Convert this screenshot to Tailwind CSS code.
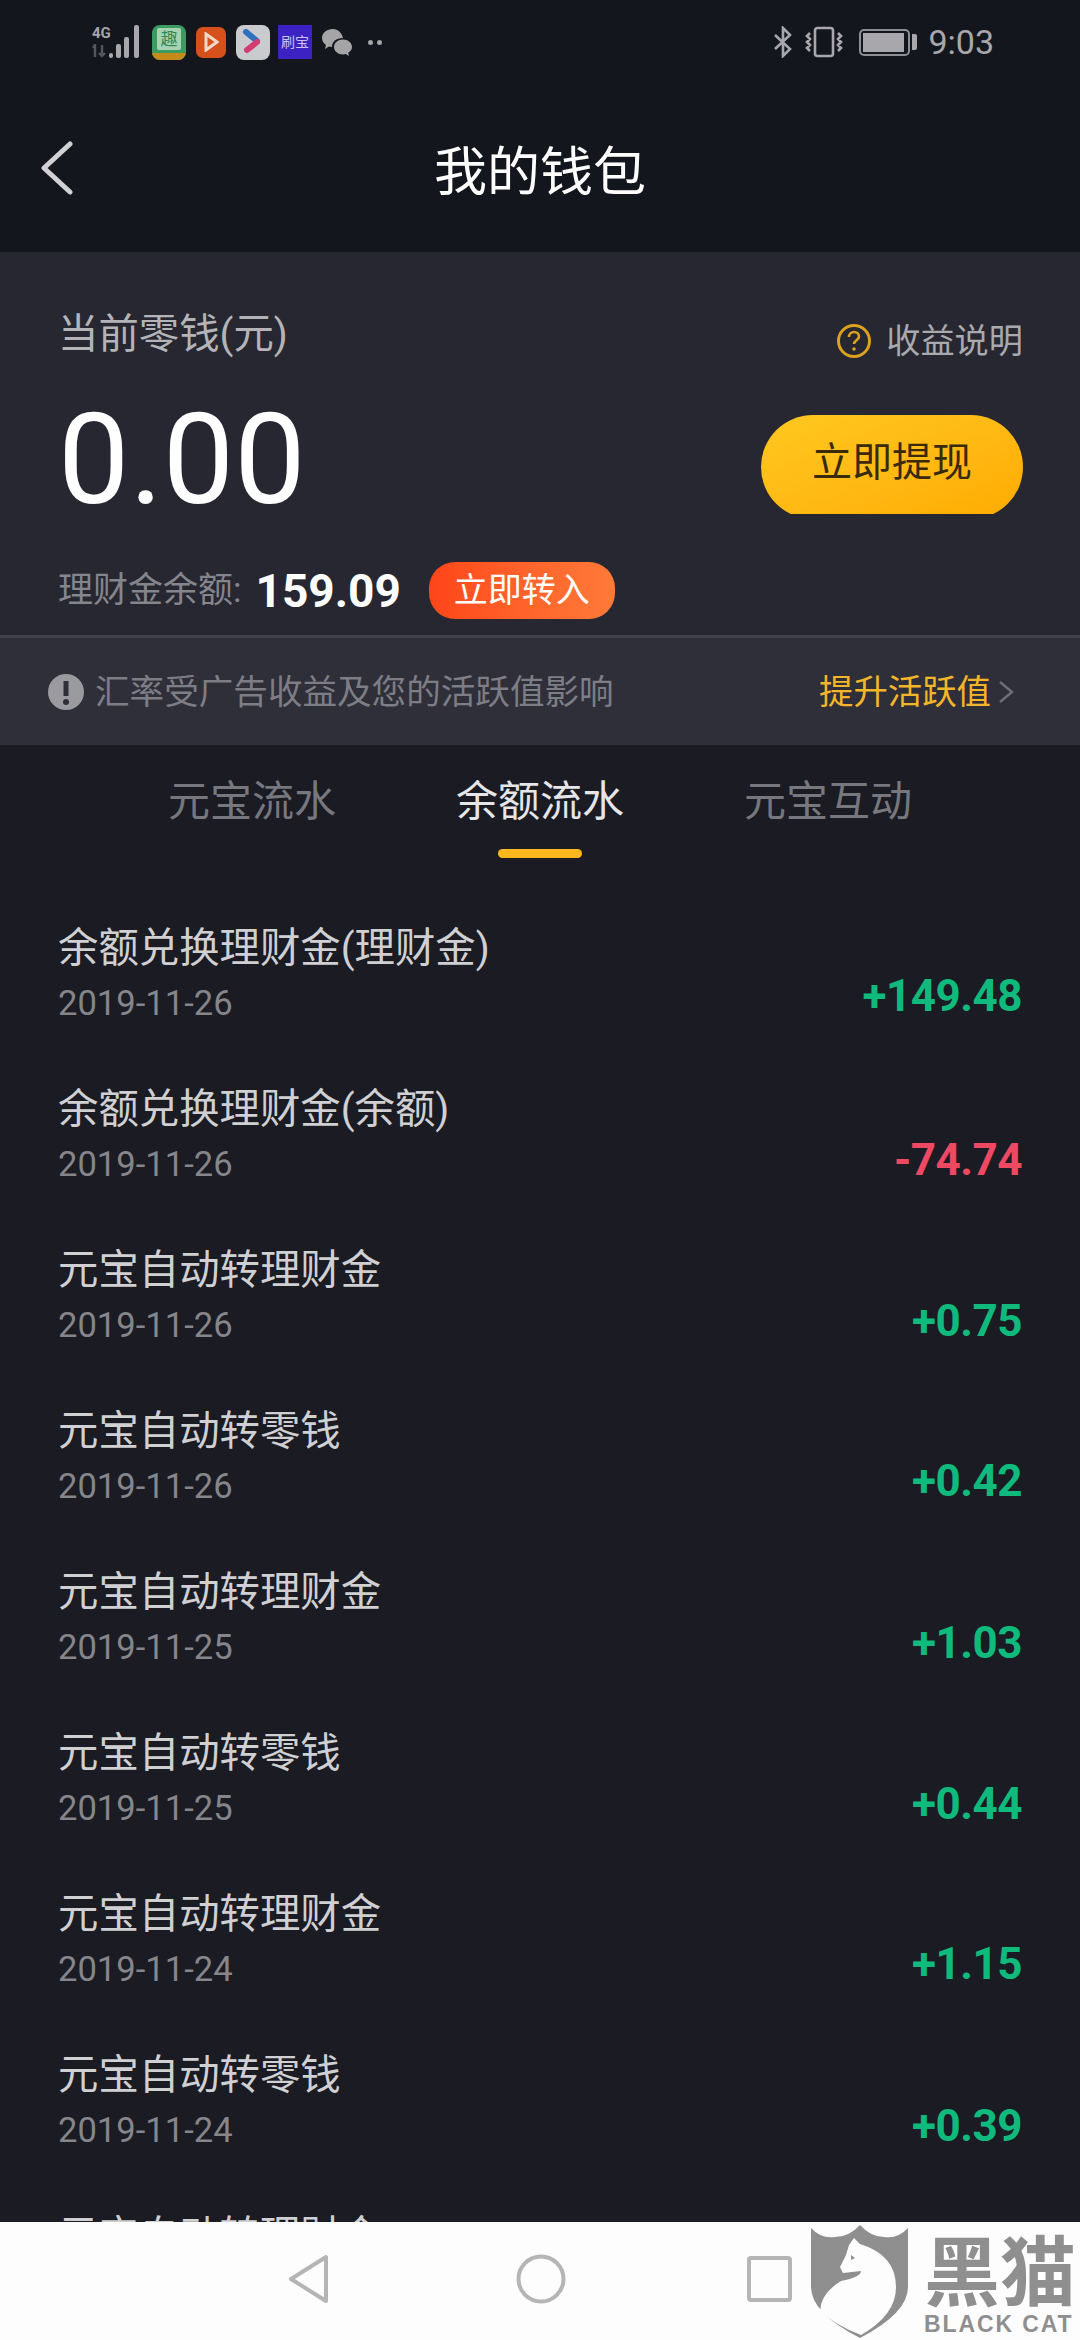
<!DOCTYPE html>
<html lang="zh-CN">
<head>
    <meta charset="UTF-8">
    <meta name="viewport" content="width=device-width, initial-scale=1.0">
    <title>我的钱包</title>
    <script src="https://cdn.jsdelivr.net/npm/@tailwindcss/browser@4"></script>
</head>
<body class="font-['Roboto','Noto_Sans_CJK_SC',sans-serif] bg-[#1a1b23]">
<div class="relative w-[1080px] h-[2340px] overflow-hidden flex flex-col bg-[#1a1b23]">

    <!-- status bar -->
    <div class="h-[84px] shrink-0 bg-[#14161e] flex items-center justify-between pl-[92px] pr-[86px]">
        <div class="flex items-center">
            <svg class="w-[50px] h-[36px]" viewBox="0 0 50 36">
                <text x="0" y="14" font-family="Roboto" font-weight="700" font-size="15" fill="#a5a5a8">4G</text>
                <path d="M3 20v13M1 24l2-3M10 21v11M7 29l3 3 3-3" stroke="#55565c" stroke-width="2.4" fill="none"/>
                <g fill="#a8a8ac"><rect x="17" y="29" width="4" height="5" rx="2"/><rect x="24" y="20" width="5" height="14" rx="2"/><rect x="32" y="13" width="5" height="21" rx="2"/><rect x="42" y="1" width="5" height="33" rx="2"/></g>
            </svg>
            <!-- app icons -->
            <div class="ml-[10px] w-[34px] h-[35px] rounded-[8px] bg-[#3b9c62] overflow-hidden flex flex-col items-center">
                <div class="mt-[3px] w-[24px] h-[22px] bg-[#a9d3b0] rounded-[2px] text-[17px] leading-[22px] text-center text-[#2f8a55]">趣</div>
                <div class="mt-[3px] w-full flex-1 bg-[#c48a1a]"></div>
            </div>
            <div class="ml-[10px] w-[30px] h-[31px] rounded-[7px] bg-[#d5501a] flex items-center justify-center">
                <svg class="w-[16px] h-[20px]" viewBox="0 0 16 20"><path d="M3 2v16l11-8z" fill="none" stroke="#f0d8c8" stroke-width="3"/></svg>
            </div>
            <div class="ml-[10px] w-[34px] h-[35px] rounded-[8px] bg-[#c9cbce] flex items-center justify-center">
                <svg class="w-[24px] h-[26px]" viewBox="0 0 24 26"><path d="M5 3l11 9" stroke="#2f6fc0" stroke-width="6" fill="none" stroke-linecap="round"/><path d="M16 13L6 21" stroke="#d23c70" stroke-width="6" fill="none" stroke-linecap="round"/></svg>
            </div>
            <div class="ml-[8px] w-[34px] h-[34px] bg-[#3c22c2] text-[#c9c4ee] text-[14px] leading-[34px] text-center">刷宝</div>
            <svg class="ml-[9px] w-[32px] h-[28px]" viewBox="0 0 32 28" fill="#a5a5a8">
                <path d="M12 1C5.5 1 1 5 1 10c0 3 1.5 5 4 7l-1 4 4-2.500c1 .3 2 .4 3 .4C11 14 15 10 22 10 21 5 17 1 12 1z"/>
                <path d="M22 11.500c-5 0-9 3.300-9 7.500s4 7.500 9 7.500c1 0 2-.1 2.800-.4l3.200 1.900-.8-3.200c2.500-1.400 3.800-3.500 3.800-5.800 0-4.200-4-7.500-9-7.500z"/>
            </svg>
            <div class="ml-[15px] flex gap-[4px]"><span class="w-[5px] h-[5px] rounded-full bg-[#a5a5a8]"></span><span class="w-[5px] h-[5px] rounded-full bg-[#a5a5a8]"></span></div>
        </div>
        <div class="flex items-center">
            <svg class="w-[18px] h-[32px]" viewBox="0 0 18 32" fill="none" stroke="#a8a8ac" stroke-width="2.6"><path d="M1 9l15 14-7 7V2l7 7L1 23"/></svg>
            <svg class="ml-[12px] w-[40px] h-[32px]" viewBox="0 0 40 32" fill="none" stroke="#a8a8ac" stroke-width="2.6">
                <rect x="11" y="2" width="18" height="28" rx="2.5"/>
                <path d="M6 7l-3 3 3 3-3 3 3 3-3 3 3 3M34 7l3 3-3 3 3 3-3 3 3 3-3 3"/>
            </svg>
            <div class="ml-[15px] w-[51px] h-[27px] rounded-[5px] border-2 border-[#8f8f93] p-[2px] flex"><div class="w-[41px] bg-[#a8a8ac]"></div></div>
            <div class="ml-[2px] w-[5px] h-[16px] rounded-r-[2px] bg-[#a8a8ac]"></div>
            <div class="ml-[11px] text-[34px] leading-[40px] text-[#a8a8ac]">9:03</div>
        </div>
    </div>

    <!-- title bar -->
    <div class="h-[168px] shrink-0 bg-[#14161e] grid grid-cols-[1fr_auto_1fr] items-center">
        <svg class="ml-[40px] w-[34px] h-[54px]" viewBox="0 0 34 54" fill="none" stroke="#d2d2d4" stroke-width="5" stroke-linecap="round" stroke-linejoin="round"><path d="M30 3L4 27l26 24"/></svg>
        <div class="text-[53px] leading-[64px] text-white mt-[10px]">我的钱包</div>
        <div></div>
    </div>

    <!-- balance card -->
    <div class="shrink-0 bg-[#262730] h-[383px] pl-[58px] pr-[57px] pt-[55px] flex flex-col">
        <div class="flex justify-between h-[56px]">
            <div class="text-[40.4px] leading-[56px] text-[#b4b4b8]">当前零钱(元)</div>
            <div class="flex items-center gap-[14px] mt-[12px]">
                <svg class="w-[36px] h-[36px]" viewBox="0 0 36 36" fill="none"><circle cx="18" cy="18" r="15.5" stroke="#dba11f" stroke-width="3"/><path d="M13 14c0-3 2.300-5 5-5s5 2 5 4.600c0 3.600-5 3.800-5 7.400" stroke="#dba11f" stroke-width="2.6"/><circle cx="18" cy="26" r="1.800" fill="#dba11f"/></svg>
                <span class="text-[34.2px] leading-[56px] text-[#a9a9ae]">收益说明</span>
            </div>
        </div>
        <div class="mt-[52px] h-[99px] flex justify-between">
            <div class="text-[127px] leading-[90px] text-white">0.00</div>
            <div class="w-[262px] h-[99px] overflow-hidden">
                <div class="h-[104px] rounded-full bg-linear-to-br from-[#ffc820] to-[#ffab00] flex items-center justify-center pb-[8px] text-[40px] text-[#3a2a0c]">立即提现</div>
            </div>
        </div>
        <div class="mt-[48px] h-[57px] flex items-center">
            <span class="text-[35px] leading-[52px] text-[#85858c]">理财金余额:</span>
            <span class="ml-[14px] text-[46px] leading-[52px] font-bold text-white">159.09</span>
            <div class="ml-[28px] w-[186px] h-[57px] rounded-[26px] bg-linear-to-r from-[#ff4519] to-[#ff7a38] text-[34px] leading-[57px] text-center text-white">立即转入</div>
        </div>
    </div>

    <!-- notice -->
    <div class="shrink-0 h-[110px] bg-[#2e2f39] border-t-[3px] border-[#41424d] pl-[48px] pr-[66px] flex items-center justify-between">
        <div class="flex items-center gap-[11px]">
            <svg class="w-[36px] h-[36px]" viewBox="0 0 36 36"><circle cx="18" cy="18" r="18" fill="#9a9a9f"/><path d="M18 7v15" stroke="#2e2f39" stroke-width="5"/><circle cx="18" cy="28" r="3" fill="#2e2f39"/></svg>
            <span class="text-[34.6px] leading-[50px] text-[#7d7d85]">汇率受广告收益及您的活跃值影响</span>
        </div>
        <div class="flex items-center gap-[7px]">
            <span class="text-[34.4px] leading-[50px] text-[#f5b52a]">提升活跃值</span>
            <svg class="w-[16px] h-[24px]" viewBox="0 0 16 24" fill="none" stroke="#6e6e76" stroke-width="2.4"><path d="M2 2l12 10L2 22"/></svg>
        </div>
    </div>

    <!-- tabs -->
    <div class="shrink-0 h-[176px] pt-[29px] flex justify-center">
        <div class="w-[288px] text-center text-[42px] leading-[56px] text-[#77777e]">元宝流水</div>
        <div class="w-[288px] flex flex-col items-center">
            <div class="text-[42px] leading-[56px] text-[#e6e6e8]">余额流水</div>
            <div class="mt-[19px] w-[84px] h-[9px] rounded-full bg-[#ffb81c]"></div>
        </div>
        <div class="w-[288px] text-center text-[42px] leading-[56px] text-[#77777e]">元宝互动</div>
    </div>

    <!-- records -->
    <div class="flex-1 overflow-hidden px-[58px]">
        <div class="h-[161px] flex justify-between items-start">
            <div><div class="text-[40.4px] leading-[56px] text-[#d0d0d3]">余额兑换理财金(理财金)</div><div class="text-[34.6px] leading-[52px] text-[#85858a]">2019-11-26</div></div>
            <div class="mt-[50px] text-[44px] leading-[50px] tracking-[-0.5px] font-bold text-[#10b97c]">+149.48</div>
        </div>
        <div class="h-[161px] flex justify-between items-start">
            <div><div class="text-[40.4px] leading-[56px] text-[#d0d0d3]">余额兑换理财金(余额)</div><div class="text-[34.6px] leading-[52px] text-[#85858a]">2019-11-26</div></div>
            <div class="mt-[53px] text-[44px] leading-[50px] tracking-[-0.5px] font-bold text-[#ee4863]">-74.74</div>
        </div>
        <div class="h-[161px] flex justify-between items-start">
            <div><div class="text-[40.4px] leading-[56px] text-[#d0d0d3]">元宝自动转理财金</div><div class="text-[34.6px] leading-[52px] text-[#85858a]">2019-11-26</div></div>
            <div class="mt-[53px] text-[44px] leading-[50px] tracking-[-0.5px] font-bold text-[#10b97c]">+0.75</div>
        </div>
        <div class="h-[161px] flex justify-between items-start">
            <div><div class="text-[40.4px] leading-[56px] text-[#d0d0d3]">元宝自动转零钱</div><div class="text-[34.6px] leading-[52px] text-[#85858a]">2019-11-26</div></div>
            <div class="mt-[52px] text-[44px] leading-[50px] tracking-[-0.5px] font-bold text-[#10b97c]">+0.42</div>
        </div>
        <div class="h-[161px] flex justify-between items-start">
            <div><div class="text-[40.4px] leading-[56px] text-[#d0d0d3]">元宝自动转理财金</div><div class="text-[34.6px] leading-[52px] text-[#85858a]">2019-11-25</div></div>
            <div class="mt-[53px] text-[44px] leading-[50px] tracking-[-0.5px] font-bold text-[#10b97c]">+1.03</div>
        </div>
        <div class="h-[161px] flex justify-between items-start">
            <div><div class="text-[40.4px] leading-[56px] text-[#d0d0d3]">元宝自动转零钱</div><div class="text-[34.6px] leading-[52px] text-[#85858a]">2019-11-25</div></div>
            <div class="mt-[53px] text-[44px] leading-[50px] tracking-[-0.5px] font-bold text-[#10b97c]">+0.44</div>
        </div>
        <div class="h-[161px] flex justify-between items-start">
            <div><div class="text-[40.4px] leading-[56px] text-[#d0d0d3]">元宝自动转理财金</div><div class="text-[34.6px] leading-[52px] text-[#85858a]">2019-11-24</div></div>
            <div class="mt-[52px] text-[44px] leading-[50px] tracking-[-0.5px] font-bold text-[#10b97c]">+1.15</div>
        </div>
        <div class="h-[161px] flex justify-between items-start">
            <div><div class="text-[40.4px] leading-[56px] text-[#d0d0d3]">元宝自动转零钱</div><div class="text-[34.6px] leading-[52px] text-[#85858a]">2019-11-24</div></div>
            <div class="mt-[53px] text-[44px] leading-[50px] tracking-[-0.5px] font-bold text-[#10b97c]">+0.39</div>
        </div>
        <div class="h-[161px] flex justify-between items-start">
            <div><div class="text-[40.4px] leading-[56px] text-[#d0d0d3]">元宝自动转理财金</div></div>
        </div>
    </div>

    <!-- android nav -->
    <div class="shrink-0 h-[118px] bg-[#fdfdfd] flex items-center justify-center pb-[4px]">
        <svg class="w-[41px] h-[50px]" viewBox="0 0 41 50" fill="none" stroke="#b5b5b5" stroke-width="4" stroke-linejoin="round"><path d="M38 3v44L3 25z"/></svg>
        <svg class="ml-[187px] w-[50px] h-[50px]" viewBox="0 0 50 50" fill="none" stroke="#b5b5b5" stroke-width="4"><circle cx="25" cy="25" r="22.5"/></svg>
        <svg class="ml-[181px] w-[45px] h-[46px]" viewBox="0 0 45 46" fill="none" stroke="#b5b5b5" stroke-width="4"><rect x="2" y="2" width="41" height="42" rx="2"/></svg>
    </div>

    <!-- watermark -->
    <div class="absolute left-[811px] top-[2225px] w-[269px] h-[115px] flex">
        <svg class="w-[97px] h-[113px] shrink-0" viewBox="0 0 97 113">
            <path d="M0 3Q10 14 24 12 38 12 49 0 60 12 73 12 87 14 97 3V62Q97 88 49 113 0 88 0 62Z" fill="#8f8f8f"/>
            <path d="M43 13 49 19Q85 30 85 62 85 90 50 110 24 100 9 86 10 68 30 56 50 52 50 46L32 48 29 42 35 30 38 20Z" fill="#fdfdfd"/>
            <path d="M40 30l4 3-4 2z" fill="#8f8f8f"/>
        </svg>
        <div class="ml-[16px] flex flex-col text-[#8f8f8f]">
            <div class="text-[76px] leading-[84px] font-bold font-['Noto_Sans_CJK_SC',sans-serif] w-[154px] whitespace-nowrap">黑猫</div>
            <div class="mt-[3px] text-[23px] leading-[24px] tracking-[1.9px] font-bold font-['Liberation_Sans',sans-serif] whitespace-nowrap">BLACK CAT</div>
        </div>
    </div>
</div>
</body>
</html>
